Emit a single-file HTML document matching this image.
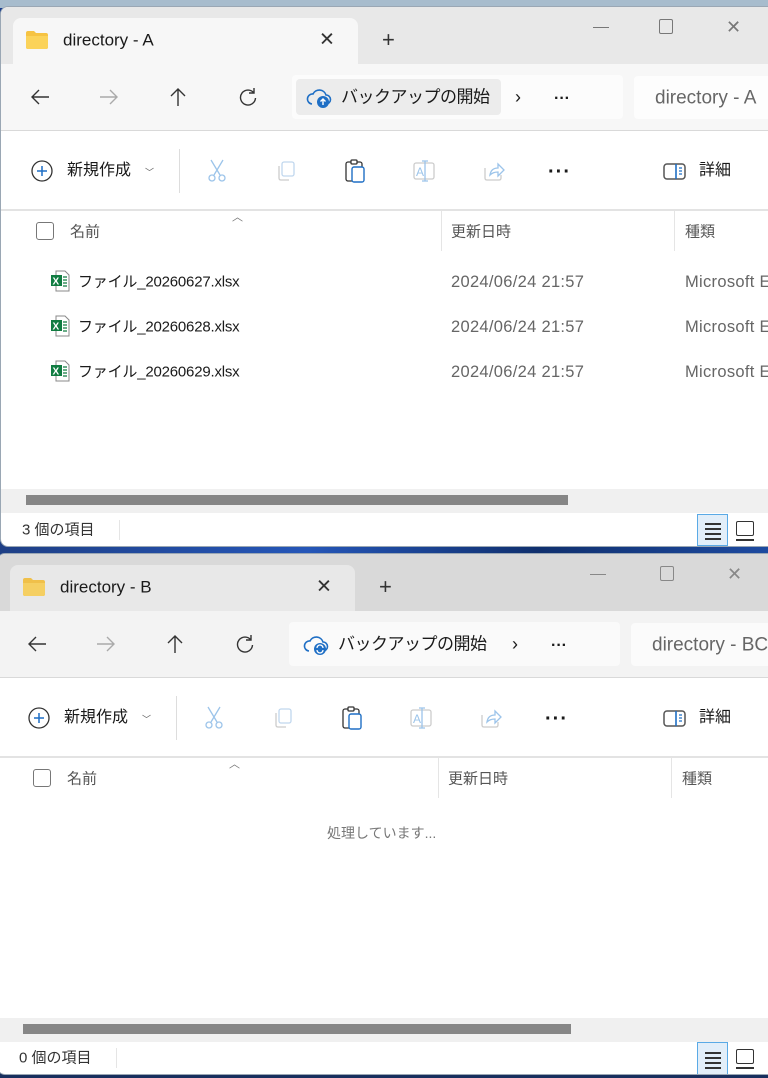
<!DOCTYPE html>
<html><head><meta charset="utf-8"><style>
*{margin:0;padding:0;box-sizing:border-box}
body{width:768px;height:1078px;overflow:hidden;position:relative;background:#1b3f8f;font-family:"Liberation Sans","Noto Sans CJK JP",sans-serif;color:#1a1a1a}
.a{position:absolute}
.win{position:absolute;left:0;width:790px;background:#fff;border-radius:8px;overflow:hidden;border:1px solid #9aa7b4}
.t{position:absolute;white-space:nowrap;line-height:1;transform:translateY(-50%)}
svg{position:absolute;overflow:visible}
.fn{font-size:15px;letter-spacing:-0.2px}
.dt{font-size:16.5px;color:#666;letter-spacing:0.3px}
</style></head><body>
<div class="a" style="left:0;top:0;width:768px;height:8px;background:#a7bccd"></div>
<div class="a" style="left:0;top:540px;width:768px;height:18px;background:linear-gradient(90deg,#1e3f86,#2556b8 40%,#10306e 70%,#1d4aa0)"></div>
<div class="a" style="left:0;top:1070px;width:768px;height:8px;background:#182f5e"></div>

<!-- WINDOW A -->
<div class="win" style="top:6px;height:541px;">
 <div class="a" style="left:0;top:0;width:100%;height:57px;background:#e8e8e8"></div>
 <div class="a" style="left:12px;top:11px;width:345px;height:47px;background:#f7f7f7;border-radius:8px 8px 0 0"></div>
 <svg style="left:25px;top:24px" width="22" height="18"><path d="M0 2 Q0 0 2 0 H8 L10 2 H20 Q22 2 22 4 V16 Q22 18 20 18 H2 Q0 18 0 16Z" fill="#f6c343"/><path d="M0 5 H22 V16 Q22 18 20 18 H2 Q0 18 0 16Z" fill="#fbd35a"/></svg>
 <div class="t" style="left:62px;top:33px;font-size:17px">directory - A</div>
 <div class="t" style="left:318px;top:33px;font-size:19px;color:#333">✕</div>
 <div class="t" style="left:381px;top:33px;font-size:22px;color:#333">+</div>
 <div class="a" style="left:592px;top:20px;width:16px;height:1px;background:#777"></div>
 <div class="a" style="left:658px;top:12px;width:14px;height:15px;border:1.3px solid #777;border-radius:2px"></div>
 <div class="t" style="left:725px;top:20px;font-size:18px;color:#777">✕</div>
 <div class="a" style="left:0;top:57px;width:100%;height:66px;background:#f7f7f7"></div>
 <svg style="left:29px;top:80px" width="20" height="20"><path d="M19 10H2M9 3L2 10L9 17" stroke="#333" stroke-width="1.4" fill="none"/></svg>
 <svg style="left:98px;top:80px" width="20" height="20"><path d="M1 10H18M11 3L18 10L11 17" stroke="#aaa" stroke-width="1.4" fill="none"/></svg>
 <svg style="left:167px;top:80px" width="20" height="20"><path d="M10 19V2M3 9L10 2L17 9" stroke="#333" stroke-width="1.4" fill="none"/></svg>
 <svg style="left:237px;top:80px" width="20" height="20"><path d="M16 6A7.5 7.5 0 1 0 17.5 11M16 1V6H11" stroke="#333" stroke-width="1.4" fill="none"/></svg>
 <div class="a" style="left:291px;top:68px;width:331px;height:44px;background:#fcfcfc;border-radius:4px"></div>
 <div class="a" style="left:295px;top:72px;width:205px;height:36px;background:#ececec;border-radius:4px"></div>
 <svg style="left:306px;top:80px" width="24" height="22"><path d="M5 17A5 5 0 0 1 6 7A7 7 0 0 1 19 8A4.5 4.5 0 0 1 19 17" stroke="#1f6fc5" stroke-width="1.6" fill="none"/><circle cx="16" cy="15" r="6" fill="#1f6fc5"/><path d="M16 18V12M13.5 14.5L16 12L18.5 14.5" stroke="#fff" stroke-width="1.4" fill="none"/></svg>
 <div class="t" style="left:340px;top:90px;font-size:17px;letter-spacing:-0.5px">バックアップの開始</div>
 <div class="t" style="left:514px;top:90px;font-size:18px">›</div>
 <div class="t" style="left:553px;top:92px;font-size:16px;font-weight:bold">···</div>
 <div class="a" style="left:633px;top:69px;width:160px;height:43px;background:#fdfdfd;border-radius:4px"></div>
 <div class="t" style="left:654px;top:91px;font-size:19px;color:#666">directory - A</div>
 <div class="a" style="left:0;top:123px;width:100%;height:1px;background:#d9d9d9"></div>
 <svg style="left:30px;top:153px" width="22" height="22"><circle cx="11" cy="11" r="10" stroke="#333" stroke-width="1.3" fill="none"/><path d="M11 6V16M6 11H16" stroke="#1f6fc5" stroke-width="1.5"/></svg>
 <div class="t" style="left:66px;top:164px;font-size:16px">新規作成</div>
 <div class="t" style="left:144px;top:166px;font-size:9px;color:#666">﹀</div>
 <div class="a" style="left:178px;top:142px;width:1px;height:44px;background:#ddd"></div>
 <svg style="left:206px;top:153px" width="20" height="22"><path d="M4 0L13 15M16 0L7 15" stroke="#9cc4ea" stroke-width="1.3"/><circle cx="5" cy="18" r="3" stroke="#9cc4ea" stroke-width="1.3" fill="none"/><circle cx="15" cy="18" r="3" stroke="#9cc4ea" stroke-width="1.3" fill="none"/></svg>
 <svg style="left:275px;top:154px" width="20" height="20"><rect x="6" y="1" width="12" height="14" rx="2" stroke="#c0d7ee" stroke-width="1.3" fill="none"/><path d="M3 5V17Q3 19 5 19H13" stroke="#ccc" stroke-width="1.3" fill="none"/></svg>
 <svg style="left:344px;top:152px" width="20" height="24"><rect x="1" y="3" width="16" height="19" rx="2" stroke="#333" stroke-width="1.3" fill="none"/><rect x="6" y="1" width="6" height="4" rx="1" stroke="#333" stroke-width="1.3" fill="#fff"/><rect x="7" y="8" width="12" height="15" rx="2" stroke="#1f6fc5" stroke-width="1.4" fill="#fff"/></svg>
 <svg style="left:412px;top:153px" width="24" height="22"><rect x="1" y="3" width="20" height="16" rx="2" stroke="#ccc" stroke-width="1.3" fill="none"/><path d="M12 1V21M9 1H15M9 21H15" stroke="#9cc4ea" stroke-width="1.3"/><text x="3" y="16" font-size="12" fill="#9cc4ea" font-family="Liberation Sans">A</text></svg>
 <svg style="left:482px;top:153px" width="22" height="22"><path d="M2 8V18Q2 20 4 20H16Q18 20 18 18V15" stroke="#ccc" stroke-width="1.3" fill="none"/><path d="M7 15Q8 8 15 8V4L21 10L15 16V12Q10 12 7 15Z" stroke="#9cc4ea" stroke-width="1.3" fill="none"/></svg>
 <div class="t" style="left:547px;top:165px;font-size:20px;font-weight:bold;letter-spacing:1px">···</div>
 <svg style="left:662px;top:156px" width="24" height="17"><rect x="1" y="1" width="21" height="15" rx="3" stroke="#555" stroke-width="1.5" fill="none"/><path d="M13 1V16" stroke="#1f6fc5" stroke-width="1.6"/><path d="M16 5H19M16 8H19M16 11H19" stroke="#1f6fc5" stroke-width="1.2"/></svg>
 <div class="t" style="left:698px;top:164px;font-size:16px">詳細</div>
 <div class="a" style="left:0;top:202px;width:100%;height:2px;background:#e3e3e3"></div>
 <div class="t" style="left:231px;top:211px;font-size:11px;color:#777">︿</div>
 <div class="a" style="left:35px;top:215px;width:18px;height:18px;border:1px solid #777;border-radius:3px"></div>
 <div class="t" style="left:69px;top:225px;font-size:15px;color:#555">名前</div>
 <div class="a" style="left:440px;top:204px;width:1px;height:40px;background:#e5e5e5"></div>
 <div class="t" style="left:450px;top:225px;font-size:15px;color:#555">更新日時</div>
 <div class="a" style="left:673px;top:204px;width:1px;height:40px;background:#e5e5e5"></div>
 <div class="t" style="left:684px;top:225px;font-size:15px;color:#555">種類</div>
 <svg style="left:49px;top:263px" width="20" height="22"><path d="M6 1H15L19 5V21H6Z" fill="#fff" stroke="#888"/><path d="M13 7H17M13 10H17M13 13H17M13 16H17" stroke="#107c41" stroke-width="1.2"/><rect x="1" y="5" width="11" height="11" fill="#107c41"/><text x="2.5" y="14.5" font-size="10" font-weight="bold" fill="#fff" font-family="Liberation Sans">X</text></svg>
 <div class="t fn" style="left:77px;top:275px">ファイル_20260627.xlsx</div>
 <div class="t dt" style="left:450px;top:275px">2024/06/24 21:57</div>
 <div class="t dt" style="left:684px;top:275px">Microsoft E</div>
 <svg style="left:49px;top:308px" width="20" height="22"><path d="M6 1H15L19 5V21H6Z" fill="#fff" stroke="#888"/><path d="M13 7H17M13 10H17M13 13H17M13 16H17" stroke="#107c41" stroke-width="1.2"/><rect x="1" y="5" width="11" height="11" fill="#107c41"/><text x="2.5" y="14.5" font-size="10" font-weight="bold" fill="#fff" font-family="Liberation Sans">X</text></svg>
 <div class="t fn" style="left:77px;top:320px">ファイル_20260628.xlsx</div>
 <div class="t dt" style="left:450px;top:320px">2024/06/24 21:57</div>
 <div class="t dt" style="left:684px;top:320px">Microsoft E</div>
 <svg style="left:49px;top:353px" width="20" height="22"><path d="M6 1H15L19 5V21H6Z" fill="#fff" stroke="#888"/><path d="M13 7H17M13 10H17M13 13H17M13 16H17" stroke="#107c41" stroke-width="1.2"/><rect x="1" y="5" width="11" height="11" fill="#107c41"/><text x="2.5" y="14.5" font-size="10" font-weight="bold" fill="#fff" font-family="Liberation Sans">X</text></svg>
 <div class="t fn" style="left:77px;top:365px">ファイル_20260629.xlsx</div>
 <div class="t dt" style="left:450px;top:365px">2024/06/24 21:57</div>
 <div class="t dt" style="left:684px;top:365px">Microsoft E</div>
 <div class="a" style="left:0;top:482px;width:100%;height:24px;background:#f0f0f0"></div>
 <div class="a" style="left:25px;top:488px;width:542px;height:10px;background:#868686"></div>
 <div class="t" style="left:21px;top:523px;font-size:15px;color:#333">3 個の項目</div>
 <div class="a" style="left:118px;top:513px;width:1px;height:20px;background:#e5e5e5"></div>
 <div class="a" style="left:696px;top:507px;width:31px;height:32px;background:#e2eef9;border:1px solid #5aaae6"></div>
 <div class="a" style="left:704px;top:516px;width:16px;height:1.5px;background:#333;box-shadow:0 5px 0 #333,0 10px 0 #333,0 15px 0 #333"></div>
 <div class="a" style="left:735px;top:514px;width:18px;height:15px;border:1.3px solid #333;border-radius:2px"></div>
 <div class="a" style="left:735px;top:532px;width:18px;height:1.5px;background:#333"></div>
</div>

<!-- WINDOW B -->
<div class="win" style="top:553px;left:-3px;height:522px;">
 <div class="a" style="left:0;top:0;width:100%;height:57px;background:#d9d9d9"></div>
 <div class="a" style="left:12px;top:11px;width:345px;height:47px;background:#e8e8e8;border-radius:8px 8px 0 0"></div>
 <svg style="left:25px;top:24px" width="22" height="18"><path d="M0 2 Q0 0 2 0 H8 L10 2 H20 Q22 2 22 4 V16 Q22 18 20 18 H2 Q0 18 0 16Z" fill="#f0c04a"/><path d="M0 5 H22 V16 Q22 18 20 18 H2 Q0 18 0 16Z" fill="#f5cf62"/></svg>
 <div class="t" style="left:62px;top:33px;font-size:17px">directory - B</div>
 <div class="t" style="left:318px;top:33px;font-size:19px;color:#333">✕</div>
 <div class="t" style="left:381px;top:33px;font-size:22px;color:#333">+</div>
 <div class="a" style="left:592px;top:20px;width:16px;height:1px;background:#888"></div>
 <div class="a" style="left:662px;top:12px;width:14px;height:15px;border:1.3px solid #888;border-radius:2px"></div>
 <div class="t" style="left:729px;top:20px;font-size:18px;color:#888">✕</div>
 <div class="a" style="left:0;top:57px;width:100%;height:66px;background:#f3f3f3"></div>
 <svg style="left:29px;top:80px" width="20" height="20"><path d="M19 10H2M9 3L2 10L9 17" stroke="#333" stroke-width="1.4" fill="none"/></svg>
 <svg style="left:98px;top:80px" width="20" height="20"><path d="M1 10H18M11 3L18 10L11 17" stroke="#aaa" stroke-width="1.4" fill="none"/></svg>
 <svg style="left:167px;top:80px" width="20" height="20"><path d="M10 19V2M3 9L10 2L17 9" stroke="#333" stroke-width="1.4" fill="none"/></svg>
 <svg style="left:237px;top:80px" width="20" height="20"><path d="M16 6A7.5 7.5 0 1 0 17.5 11M16 1V6H11" stroke="#333" stroke-width="1.4" fill="none"/></svg>
 <div class="a" style="left:291px;top:68px;width:331px;height:44px;background:#fafafa;border-radius:4px"></div>
 <svg style="left:306px;top:80px" width="24" height="22"><path d="M5 17A5 5 0 0 1 6 7A7 7 0 0 1 19 8A4.5 4.5 0 0 1 19 17" stroke="#1f6fc5" stroke-width="1.6" fill="none"/><circle cx="16" cy="15" r="6" fill="#1f6fc5"/><path d="M13 14A3 3 0 0 1 19 14M19 16A3 3 0 0 1 13 16" stroke="#fff" stroke-width="1.3" fill="none"/></svg>
 <div class="t" style="left:340px;top:90px;font-size:17px;letter-spacing:-0.5px">バックアップの開始</div>
 <div class="t" style="left:514px;top:90px;font-size:18px">›</div>
 <div class="t" style="left:553px;top:92px;font-size:16px;font-weight:bold">···</div>
 <div class="a" style="left:633px;top:69px;width:160px;height:43px;background:#fbfbfb;border-radius:4px"></div>
 <div class="t" style="left:654px;top:91px;font-size:19px;color:#666">directory - BC</div>
 <div class="a" style="left:0;top:123px;width:100%;height:1px;background:#d9d9d9"></div>
 <svg style="left:30px;top:153px" width="22" height="22"><circle cx="11" cy="11" r="10" stroke="#333" stroke-width="1.3" fill="none"/><path d="M11 6V16M6 11H16" stroke="#1f6fc5" stroke-width="1.5"/></svg>
 <div class="t" style="left:66px;top:164px;font-size:16px">新規作成</div>
 <div class="t" style="left:144px;top:166px;font-size:9px;color:#666">﹀</div>
 <div class="a" style="left:178px;top:142px;width:1px;height:44px;background:#ddd"></div>
 <svg style="left:206px;top:153px" width="20" height="22"><path d="M4 0L13 15M16 0L7 15" stroke="#9cc4ea" stroke-width="1.3"/><circle cx="5" cy="18" r="3" stroke="#9cc4ea" stroke-width="1.3" fill="none"/><circle cx="15" cy="18" r="3" stroke="#9cc4ea" stroke-width="1.3" fill="none"/></svg>
 <svg style="left:275px;top:154px" width="20" height="20"><rect x="6" y="1" width="12" height="14" rx="2" stroke="#c0d7ee" stroke-width="1.3" fill="none"/><path d="M3 5V17Q3 19 5 19H13" stroke="#ccc" stroke-width="1.3" fill="none"/></svg>
 <svg style="left:344px;top:152px" width="20" height="24"><rect x="1" y="3" width="16" height="19" rx="2" stroke="#333" stroke-width="1.3" fill="none"/><rect x="6" y="1" width="6" height="4" rx="1" stroke="#333" stroke-width="1.3" fill="#fff"/><rect x="7" y="8" width="12" height="15" rx="2" stroke="#1f6fc5" stroke-width="1.4" fill="#fff"/></svg>
 <svg style="left:412px;top:153px" width="24" height="22"><rect x="1" y="3" width="20" height="16" rx="2" stroke="#ccc" stroke-width="1.3" fill="none"/><path d="M12 1V21M9 1H15M9 21H15" stroke="#9cc4ea" stroke-width="1.3"/><text x="3" y="16" font-size="12" fill="#9cc4ea" font-family="Liberation Sans">A</text></svg>
 <svg style="left:482px;top:153px" width="22" height="22"><path d="M2 8V18Q2 20 4 20H16Q18 20 18 18V15" stroke="#ccc" stroke-width="1.3" fill="none"/><path d="M7 15Q8 8 15 8V4L21 10L15 16V12Q10 12 7 15Z" stroke="#9cc4ea" stroke-width="1.3" fill="none"/></svg>
 <div class="t" style="left:547px;top:165px;font-size:20px;font-weight:bold;letter-spacing:1px">···</div>
 <svg style="left:665px;top:156px" width="24" height="17"><rect x="1" y="1" width="21" height="15" rx="3" stroke="#555" stroke-width="1.5" fill="none"/><path d="M13 1V16" stroke="#1f6fc5" stroke-width="1.6"/><path d="M16 5H19M16 8H19M16 11H19" stroke="#1f6fc5" stroke-width="1.2"/></svg>
 <div class="t" style="left:701px;top:164px;font-size:16px">詳細</div>
 <div class="a" style="left:0;top:202px;width:100%;height:2px;background:#e3e3e3"></div>
 <div class="t" style="left:231px;top:211px;font-size:11px;color:#777">︿</div>
 <div class="a" style="left:35px;top:215px;width:18px;height:18px;border:1px solid #777;border-radius:3px"></div>
 <div class="t" style="left:69px;top:225px;font-size:15px;color:#555">名前</div>
 <div class="a" style="left:440px;top:204px;width:1px;height:40px;background:#e5e5e5"></div>
 <div class="t" style="left:450px;top:225px;font-size:15px;color:#555">更新日時</div>
 <div class="a" style="left:673px;top:204px;width:1px;height:40px;background:#e5e5e5"></div>
 <div class="t" style="left:684px;top:225px;font-size:15px;color:#555">種類</div>
 <div class="t" style="left:329px;top:279px;font-size:14px;color:#777">処理しています...</div>
 <div class="a" style="left:0;top:464px;width:100%;height:24px;background:#f0f0f0"></div>
 <div class="a" style="left:25px;top:470px;width:548px;height:10px;background:#868686"></div>
 <div class="t" style="left:21px;top:504px;font-size:15px;color:#333">0 個の項目</div>
 <div class="a" style="left:118px;top:494px;width:1px;height:20px;background:#e5e5e5"></div>
 <div class="a" style="left:699px;top:488px;width:31px;height:33px;background:#e2eef9;border:1px solid #5aaae6"></div>
 <div class="a" style="left:707px;top:498px;width:16px;height:1.5px;background:#333;box-shadow:0 5px 0 #333,0 10px 0 #333,0 15px 0 #333"></div>
 <div class="a" style="left:738px;top:495px;width:18px;height:15px;border:1.3px solid #333;border-radius:2px"></div>
 <div class="a" style="left:738px;top:513px;width:18px;height:1.5px;background:#333"></div>
</div>
</body></html>
